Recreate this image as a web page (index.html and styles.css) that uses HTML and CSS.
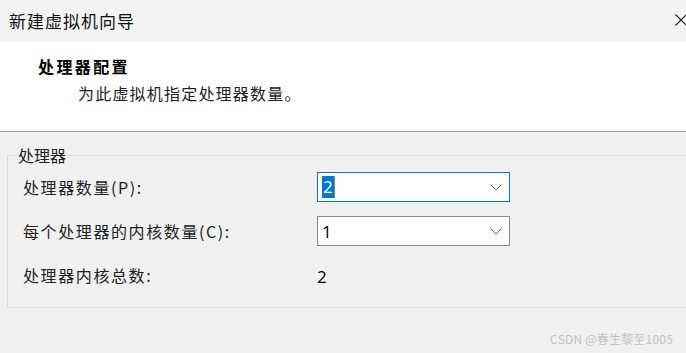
FILE: index.html
```html
<!DOCTYPE html>
<html lang="zh-CN">
<head>
  <meta charset="UTF-8" />
  <title>新建虚拟机向导</title>
  <link rel="stylesheet" href="styles.css">
</head>
<body>

  <div class="titlebar">
    <span class="title">新建虚拟机向导</span>
    <svg class="close" width="12" height="12" viewBox="0 0 12 12">
      <path d="M0.5 0.5 L11.5 11.5 M11.5 0.5 L0.5 11.5" stroke="#1a1a1a" stroke-width="1.1" fill="none"/>
    </svg>
  </div>

  <div class="header">
    <h1 class="heading">处理器配置</h1>
    <p class="subtitle">为此虚拟机指定处理器数量。</p>
  </div>

  <div class="main">
    <fieldset class="group">
      <legend>处理器</legend>
      <div class="rows">
        <label class="label">处理器数量(P):</label>
        <div class="combo active">
          <span class="value"><span class="sel">2</span><span class="caret"></span></span>
          <svg class="chev" width="12" height="7" viewBox="0 0 12 7">
            <path d="M0.5 0.5 L6 6 L11.5 0.5" stroke="#5f5f5f" stroke-width="1" fill="none"/>
          </svg>
        </div>

        <label class="label">每个处理器的内核数量(C):</label>
        <div class="combo">
          <span class="value">1</span>
          <svg class="chev" width="12" height="7" viewBox="0 0 12 7">
            <path d="M0.5 0.5 L6 6 L11.5 0.5" stroke="#5f5f5f" stroke-width="1" fill="none"/>
          </svg>
        </div>

        <span class="label">处理器内核总数:</span>
        <span class="total">2</span>
      </div>
    </fieldset>
  </div>

  <div class="watermark">CSDN @春生黎至1005</div>

</body>
</html>
```

FILE: styles.css
```css
* {
  margin: 0;
  padding: 0;
  box-sizing: border-box;
}
body {
  font-family: "Noto Sans CJK SC", "Noto Sans", sans-serif;
  background: #f0f0f0;
  color: #1a1a1a;
  width: 686px;
  height: 353px;
  overflow: hidden;
  position: relative;
}
.titlebar {
  height: 42px;
  background: #f3f3f3;
  display: flex;
  align-items: center;
  justify-content: space-between;
  padding: 0 0 2px 9px;
}
.title {
  font-size: 17px;
  letter-spacing: 1px;
  color: #111;
}
.close {
  margin-right: -1px;
}
.header {
  height: 90px;
  background: #fff;
  border-bottom: 1px solid #a0a0a0;
  padding: 13px 0 0 38px;
}
.heading {
  font-size: 16px;
  font-weight: bold;
  letter-spacing: 2.4px;
  line-height: 22px;
  color: #000;
}
.subtitle {
  font-size: 16px;
  letter-spacing: 1.2px;
  line-height: 22px;
  margin: 5px 0 0 40px;
  color: #222;
}
.main {
  padding-top: 12px;
}
.group {
  margin: 0 -10px 0 7px;
  border: 1px solid #dcdcdc;
  padding: 6px 0 17px 0;
}
.group legend {
  font-size: 16px;
  line-height: 22px;
  margin-left: 9px;
  padding: 0 1px;
  color: #222;
}
.rows {
  display: grid;
  grid-template-columns: 294px 193px;
  grid-auto-rows: 30px;
  row-gap: 14px;
  align-items: center;
  padding-left: 15px;
}
.label {
  font-size: 16px;
  letter-spacing: 1.6px;
  color: #222;
}
.combo {
  height: 30px;
  border: 1px solid #8a8a8a;
  background: #fff;
  display: flex;
  align-items: center;
  justify-content: space-between;
  padding: 0 7px 0 4px;
  font-family: "Open Sans", "Noto Sans", sans-serif;
  font-size: 17px;
  color: #000;
}
.combo.active {
  border-color: #0078d7;
}
.value {
  display: flex;
  align-items: center;
}
.sel {
  background: #0078d7;
  color: #fff;
  line-height: 22px;
  padding: 0 1px;
}
.caret {
  width: 1px;
  height: 22px;
  background: #d9731f;
}
.chev {
  margin-top: 1px;
}
.total {
  font-family: "Open Sans", "Noto Sans", sans-serif;
  font-size: 17px;
  color: #000;
  padding-top: 2px;
}
.watermark {
  position: absolute;
  right: 13px;
  bottom: 6px;
  font-size: 12px;
  letter-spacing: 0.2px;
  color: #c4c4c4;
}
```
